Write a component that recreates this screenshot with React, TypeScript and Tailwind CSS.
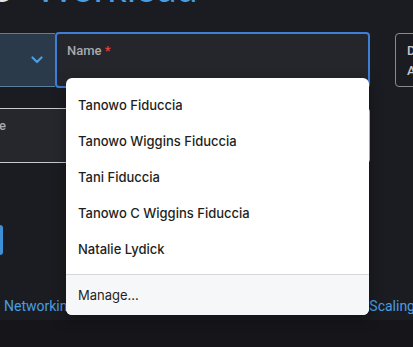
import React from "react";

const items = [
  "Tanowo Fiduccia",
  "Tanowo Wiggins Fiduccia",
  "Tani Fiduccia",
  "Tanowo C Wiggins Fiduccia",
  "Natalie Lydick",
];

export default function App() {
  return (
    <div className="relative w-[413px] h-[347px] overflow-hidden bg-[#16161a] font-['Roboto',sans-serif]">
      <div className="h-[320px] bg-[#1b1c21] overflow-hidden">
        {/* Title */}
        <div className="h-[32px] overflow-hidden">
          <div className="-mt-[33px] flex items-start text-[38px] leading-[40px] whitespace-nowrap font-['Lato',sans-serif]">
            <span dir="rtl" className="inline-block shrink-0 w-[11px] overflow-hidden text-right text-[#e4e4e7]">
              Create
            </span>
            <span className="ml-[24px] text-[#4a9ee0]">Workload</span>
          </div>
        </div>

        {/* Row 1 */}
        <div className="flex h-[56px] overflow-hidden">
          <div className="shrink-0 mt-[1px] h-[54px] w-[55px] bg-[#2b3a4b] border-y border-[#5d7d9c] flex items-center justify-end pr-[12px]">
            <svg width="12" height="8" viewBox="0 0 12 8" fill="none">
              <path d="M1.5 1.5 L6 6 L10.5 1.5" stroke="#4a9ee0" strokeWidth="2.2" strokeLinecap="round" strokeLinejoin="round" />
            </svg>
          </div>
          <div className="shrink-0 w-[315px] h-[56px] border-2 border-[#3d7fd6] rounded-[4px] bg-[#25262b] px-[10px] pt-[8px]">
            <div className="text-[13px] leading-[18px] font-medium text-[#a9a9ae]">
              Name <span className="text-[#e5403b]">*</span>
            </div>
          </div>
          <div className="shrink-0 ml-[25px] mt-[1px] h-[54px] w-[140px] border border-[#8a8a8e] rounded-[4px] px-[11px] pt-[7px] text-[13px] leading-[20px] font-medium text-[#c8c8cc] whitespace-nowrap">
            <div>Description</div>
            <div>Any text you want that better describes</div>
          </div>
        </div>

        {/* Row 2 */}
        <div className="mt-[20px] w-[370px] h-[55px] bg-[#26272c] border-y border-r border-[#c9c9cc] rounded-r-[4px] pt-[8px]">
          <span dir="rtl" className="inline-block w-[6px] overflow-hidden text-right text-[13px] leading-[18px] font-medium text-[#a9a9ae] whitespace-nowrap">
            Namespace
          </span>
        </div>

        {/* Button edge */}
        <div className="mt-[62px] w-[3px] h-[30px] bg-[#3d8fd6] rounded-r-[3px]" />

        {/* Tabs */}
        <div className="mt-[42px] flex justify-between pl-[4px] text-[14px] leading-[18px] text-[#4a9ee0] whitespace-nowrap">
          <span>Networking</span>
          <span className="-mr-[2px]">Scaling</span>
        </div>
      </div>

      {/* Dropdown */}
      <div className="absolute left-[66px] top-[78px] w-[303px] bg-white rounded-[6px] shadow-[0_4px_14px_rgba(0,0,0,0.35)] overflow-hidden font-['Inter',sans-serif] text-[13px] text-[#1f1f22]">
        <div className="pt-[10px] pb-[6px]">
          {items.map((t) => (
            <div key={t} className="h-[36px] flex items-center px-[12px] font-medium">
              {t}
            </div>
          ))}
        </div>
        <div className="border-t border-[#d6d6da] bg-[#f6f7f9] h-[41px] flex items-center px-[12px] pt-[2px]">
          Manage...
        </div>
      </div>
    </div>
  );
}
